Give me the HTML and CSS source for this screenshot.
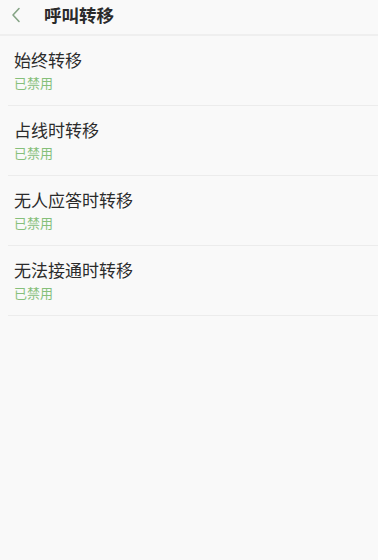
FILE: index.html
```html
<!DOCTYPE html>
<html lang="zh">
<head>
<meta charset="utf-8">
<link rel="stylesheet" href="styles.css">
</head>
<body>
<div class="app">
  <header class="bar">
    <svg class="back" width="10" height="16" viewBox="0 0 10 16"><path d="M8 1.5 L2 8 L8 14.5" fill="none" stroke="#86a486" stroke-width="1.6" stroke-linecap="round" stroke-linejoin="round"/></svg>
    <h1 class="title">呼叫转移</h1>
  </header>
  <ul class="list">
    <li class="item"><div class="name">始终转移</div><div class="state">已禁用</div></li>
    <li class="item"><div class="name">占线时转移</div><div class="state">已禁用</div></li>
    <li class="item"><div class="name">无人应答时转移</div><div class="state">已禁用</div></li>
    <li class="item"><div class="name">无法接通时转移</div><div class="state">已禁用</div></li>
  </ul>
</div>
</body>
</html>
```
FILE: styles.css
```css
html, body {
  margin: 0;
  padding: 0;
  background: #f9f9f9;
  font-family: "Noto Sans CJK SC", "Noto Sans", sans-serif;
}
.app {
  width: 378px;
  min-height: 560px;
}
.bar {
  height: 34px;
  display: flex;
  align-items: center;
  border-bottom: 2px solid #efefef;
}
.back {
  margin-left: 11px;
  margin-top: -4px;
}
.title {
  margin: -6px 0 0 23px;
  font-size: 17.5px;
  font-weight: 700;
  color: #2a2a2a;
}
.list {
  list-style: none;
  margin: 0;
  padding: 0;
}
.item {
  height: 69px;
  margin-left: 8px;
  padding-left: 6px;
  border-bottom: 1px solid #ececec;
  display: flex;
  flex-direction: column;
  justify-content: center;
  gap: 3px;
}
.name {
  font-size: 17px;
  color: #2b2b2b;
  line-height: 22px;
  margin-top: -1px;
}
.state {
  font-size: 13px;
  color: #86c07a;
  line-height: 17px;
}
```
